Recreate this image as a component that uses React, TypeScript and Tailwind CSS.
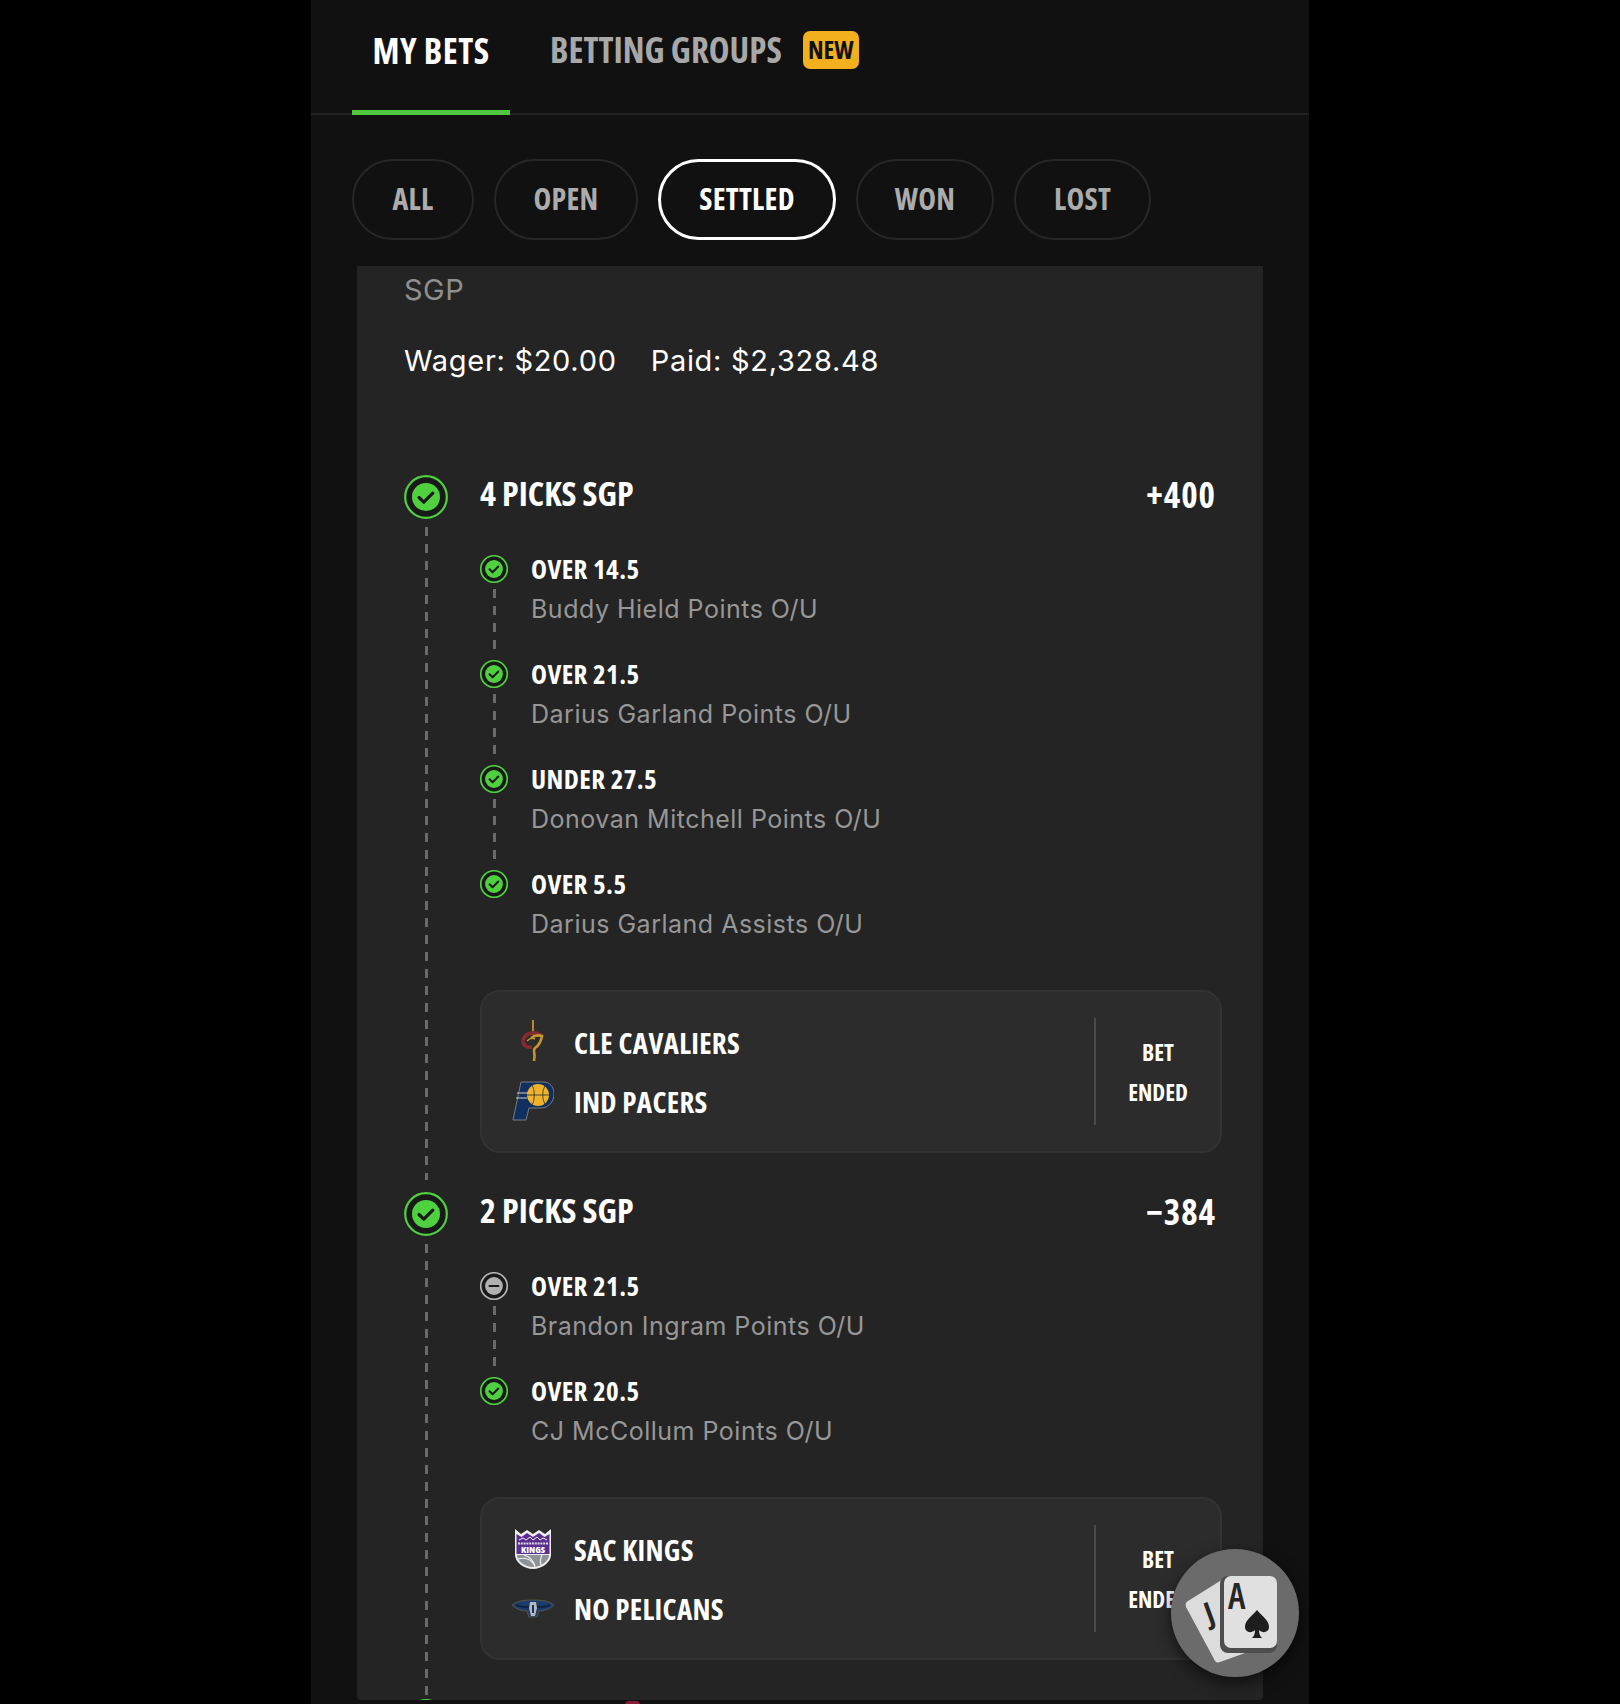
import React from "react";

const cond = "font-['Open_Sans',sans-serif] [font-stretch:62.5%] whitespace-nowrap";
const ui = "font-['Inter','Noto_Sans',sans-serif] whitespace-nowrap";

function Check({ size, big }: { size: number; big?: boolean }) {
  return (
    <svg width={size} height={size} viewBox="0 0 44 44" className="shrink-0">
      <circle cx="22" cy="22" r="20.800" fill="#191919" stroke="#4fd13f" strokeWidth={big ? 2.2 : 2.6} />
      <circle cx="22" cy="22" r="14" fill="#4fd13f" />
      <path d="M15 22.500l4.800 4.700 9-9" fill="none" stroke="#1a1a1a" strokeWidth="3.200" strokeLinecap="round" strokeLinejoin="round" />
    </svg>
  );
}

function Minus({ size }: { size: number }) {
  return (
    <svg width={size} height={size} viewBox="0 0 44 44" className="shrink-0">
      <circle cx="22" cy="22" r="20.800" fill="#191919" stroke="#b5b5b5" strokeWidth="2.600" />
      <circle cx="22" cy="22" r="14" fill="#b0b0b0" />
      <path d="M15 22h14" stroke="#1a1a1a" strokeWidth="3.400" strokeLinecap="round" />
    </svg>
  );
}

const dash = "bg-[repeating-linear-gradient(to_bottom,#6a6a6a_0,#6a6a6a_9px,transparent_9px,transparent_17px)]";

function Leg({ title, sub, last, void: isVoid }: { title: string; sub: string; last?: boolean; void?: boolean }) {
  return (
    <div className="flex h-[105px]">
      <div className="flex w-[51px] shrink-0 flex-col items-start">
        {isVoid ? <Minus size={28} /> : <Check size={28} />}
        {!last && <div className={`ml-[13px] mt-[6px] h-[61px] w-[3px] ${dash}`} />}
      </div>
      <div>
        <div className={`${cond} -mt-[2px] flex h-[30px] items-center text-[27px] font-bold leading-none tracking-[0.4px] text-white`}>{title}</div>
        <div className={`${ui} mt-[11px] flex h-[30px] items-center text-[25px] leading-none tracking-[0.5px] text-[#979797]`}>{sub}</div>
      </div>
    </div>
  );
}

const Cavs = () => (
  <svg width="24" height="44" viewBox="0 0 24 44">
    <path d="M12 0v15" stroke="#b8862d" strokeWidth="2" />
    <path d="M20 15C12 10 3 14 2 21c0 5 5 7 9 6" fill="none" stroke="#8a2a2e" strokeWidth="3.500" />
    <path d="M10 18c4-3 8-3 11-2-1 6-4 10-7 12-3 3 1 3-1 13" fill="none" stroke="#c7972f" strokeWidth="2.600" />
    <path d="M6 21c3-3 6-3 8-2" fill="none" stroke="#c7972f" strokeWidth="1.500" />
  </svg>
);
const Pacers = () => (
  <svg width="42" height="40" viewBox="0 0 42 40">
    <path d="M9 1h22c7 0 11 5 11 12s-5 14-13 14H17l-3 12H1z" fill="#12305f" stroke="#8f8f8f" strokeWidth="0.800" />
    <circle cx="26" cy="14" r="11" fill="#f2b32c" />
    <path d="M15 14h22M20 4c3 5 3 15 0 20M33 5c-3 5-3 13 0 18" stroke="#3a3a2a" strokeWidth="0.900" fill="none" />
    <path d="M5 12h11M4 17h11" stroke="#c9c9c9" strokeWidth="1.200" />
  </svg>
);
const Kings = () => (
  <svg width="38" height="42" viewBox="0 0 38 42">
    <path d="M1 1l6 5 6-4 6 4 6-4 6 4 6-5v26c0 7-9 14-18 14S1 34 1 27z" fill="#eeeeee" />
    <path d="M2.500 6l5 3 5.500-4 6 4 6-4 5.500 4 5-3v20h-33z" fill="#5a2d91" />
    <path d="M5 12l4-2 3 2 4-3 3 3 4-3 3 3 3-2 4 2" fill="none" stroke="#f0f0f0" strokeWidth="1" />
    <path d="M4 15.500h30" stroke="#dcdcdc" strokeWidth="1.800" strokeDasharray="2 0.800" />
    <text x="19" y="25" textAnchor="middle" fontFamily="Open Sans" fontWeight="800" fontSize="9.500" fill="#ffffff" className="[font-stretch:75%]">KINGS</text>
    <path d="M3 27h32c0 6-8 12-16 12S3 33 3 27z" fill="#8d9297" />
    <path d="M10 27c6 2 10 6 11 12M4 31c7-2 13 0 17 7M28 27c-2 4-2 7-1 10" stroke="#f0f0f0" strokeWidth="1.200" fill="none" />
  </svg>
);
const Pelicans = () => (
  <svg width="42" height="20" viewBox="0 0 42 20">
    <path d="M0 7c5-4 12-5 21-5s16 1 21 5c-4 4-10 6-15 6l-2 6h-8l-2-6C10 13 4 11 0 7z" fill="#1a3d6e" stroke="#7a6a48" strokeWidth="0.600" />
    <path d="M4 7c5 2 10 3 14 1M38 7c-5 2-10 3-14 1" stroke="#12243f" strokeWidth="2.200" fill="none" />
    <path d="M18 4h6l1 6-2 8h-4l-2-8z" fill="#b4b8c0" />
    <path d="M20 7h2v8h-2z" fill="#23304f" />
  </svg>
);

function Matchup({ a, b, logoA, logoB }: { a: string; b: string; logoA: React.ReactNode; logoB: React.ReactNode }) {
  return (
    <div className="flex h-[163px] w-[742px] items-center rounded-[20px] border-2 border-[#333333] bg-[#2c2c2c]">
      <div className="flex flex-1 flex-col gap-[14px] pl-[30px]">
        {[{ t: a, l: logoA }, { t: b, l: logoB }].map((r) => (
          <div key={r.t} className="flex h-[45px] items-center">
            <div className="flex w-[62px] shrink-0 items-center justify-center pr-[20px]">{r.l}</div>
            <span className={`${cond} text-[29px] font-bold leading-none tracking-[0.3px] text-white`}>{r.t}</span>
          </div>
        ))}
      </div>
      <div className="h-[107px] w-[2px] bg-[#4a4a4a]" />
      <div className={`${cond} flex w-[124px] flex-col items-center gap-[17px] pt-[2px] text-[23px] font-bold leading-[23px] text-white`}>
        <span>BET</span>
        <span>ENDED</span>
      </div>
    </div>
  );
}

function Group({ title, odds, lineH, children }: { title: string; odds: string; lineH: string; children: React.ReactNode }) {
  return (
    <div className="flex">
      <div className="flex w-[76px] shrink-0 flex-col items-start">
        <Check size={44} big />
        <div className={`ml-[21px] mt-[8px] w-[3px] ${lineH} ${dash}`} />
      </div>
      <div className="w-[741px]">
        <div className="flex h-[80px] items-start justify-between pr-[5px]">
          <span className={`${cond} -mt-[4px] text-[34px] font-bold leading-[44px] text-white`}>{title}</span>
          <span className={`${cond} -mt-[2px] text-[35px] font-bold leading-[44px] tracking-[1px] text-white`}>{odds}</span>
        </div>
        {children}
      </div>
    </div>
  );
}

const Pill = ({ label, w, active }: { label: string; w: string; active?: boolean }) => (
  <div
    className={`${cond} flex h-[81px] ${w} items-center justify-center rounded-full pb-[2px] text-[30px] font-bold tracking-[0.3px] ${
      active ? "border-[3px] border-white text-white" : "border-2 border-[#272727] text-[#acacac]"
    }`}
  >
    {label}
  </div>
);

function CardsFab() {
  return (
    <div className="absolute left-[1171px] top-[1549px] h-[128px] w-[128px] rounded-full bg-[#6b6b6b] shadow-[0_6px_16px_rgba(0,0,0,0.6)]">
      <svg width="128" height="128" viewBox="0 0 128 128">
        <path d="M17 52l32-20c3-2 6-1 7 2l24 63c1 3 0 5-3 6l-28 10c-3 1-5 0-6-3L15 58c-1-3 0-5 2-6z" fill="#dcdcdc" />
        <text x="38" y="76" transform="rotate(-20 36 76)" fontFamily="Open Sans" fontWeight="700" fontSize="30" fill="#262626" className="[font-stretch:62.5%]">J</text>
        <rect x="49" y="27" width="57" height="77" rx="8" fill="#4e4e4e" />
        <rect x="53" y="27" width="53" height="72" rx="7" fill="#e0e0e0" />
        <text x="57" y="60" fontFamily="Open Sans" fontWeight="600" fontSize="36" fill="#262626" className="[font-stretch:62.5%]">A</text>
        <path d="M86 61c5 6 12 10 12 17 0 5-6 7-10 3 0 4 1 6 3 8H81c2-2 3-4 3-8-4 4-10 2-10-3 0-7 7-11 12-17z" fill="#1e1e1e" />
      </svg>
    </div>
  );
}

export default function App() {
  return (
    <div className="relative flex h-[1704px] w-full justify-center overflow-hidden bg-black">
      <div className="h-full w-[998px] bg-[#111111]">
        <div className="flex h-[115px] items-start gap-[22px] border-b-2 border-[#222] px-[41px]">
          <div className={`${cond} flex h-[115px] w-[158px] items-center justify-center border-b-[5px] border-[#4fc73e] pb-[7px] text-[35px] font-bold tracking-[0.5px] text-white`}>
            MY BETS
          </div>
          <div className="flex h-[100px] items-center gap-[21px] pl-[18px]">
            <span className={`${cond} text-[35px] font-bold text-[#a8a8a8]`}>BETTING GROUPS</span>
            <span className={`${cond} flex h-[38px] w-[56px] items-center justify-center rounded-[7px] bg-[#f2b01e] text-[25px] font-bold text-[#111]`}>NEW</span>
          </div>
        </div>
        <div className="flex gap-5 px-[41px] pt-[44px]">
          <Pill label="ALL" w="w-[122px]" />
          <Pill label="OPEN" w="w-[144px]" />
          <Pill label="SETTLED" w="w-[178px]" active />
          <Pill label="WON" w="w-[138px]" />
          <Pill label="LOST" w="w-[137px]" />
        </div>
        <div className="ml-[46px] mt-[26px] h-[1434px] w-[906px] overflow-hidden rounded-b-[4px] bg-[#242424] pl-[47px]">
          <div className={`${ui} flex h-[47px] items-center text-[29px] leading-none tracking-[0.5px] text-[#8f8f8f]`}>SGP</div>
          <div className={`${ui} mt-[25px] flex h-[44px] items-center gap-[34px] text-[29px] leading-none tracking-[0.7px] text-white`}>
            <span>Wager: $20.00</span>
            <span>Paid: $2,328.48</span>
          </div>
          <div className="mt-[93px]">
            <Group title="4 PICKS SGP" odds="+400" lineH="h-[653px]">
              <Leg title="OVER 14.5" sub="Buddy Hield Points O/U" />
              <Leg title="OVER 21.5" sub="Darius Garland Points O/U" />
              <Leg title="UNDER 27.5" sub="Donovan Mitchell Points O/U" />
              <Leg title="OVER 5.5" sub="Darius Garland Assists O/U" last />
              <div className="mt-[15px]">
                <Matchup a="CLE CAVALIERS" b="IND PACERS" logoA={<Cavs />} logoB={<Pacers />} />
              </div>
              <div className="h-[39px]" />
            </Group>
            <Group title="2 PICKS SGP" odds="−384" lineH="h-[452px]">
              <Leg title="OVER 21.5" sub="Brandon Ingram Points O/U" void />
              <Leg title="OVER 20.5" sub="CJ McCollum Points O/U" last />
              <div className="mt-[15px]">
                <Matchup a="SAC KINGS" b="NO PELICANS" logoA={<Kings />} logoB={<Pelicans />} />
              </div>
              <div className="h-[39px]" />
            </Group>
            <Check size={44} big />
          </div>
        </div>
      </div>
      <div className="absolute left-[625px] top-[1701px] h-[8px] w-[15px] rounded-full bg-[#8a1c3a]" />
      <CardsFab />
    </div>
  );
}
